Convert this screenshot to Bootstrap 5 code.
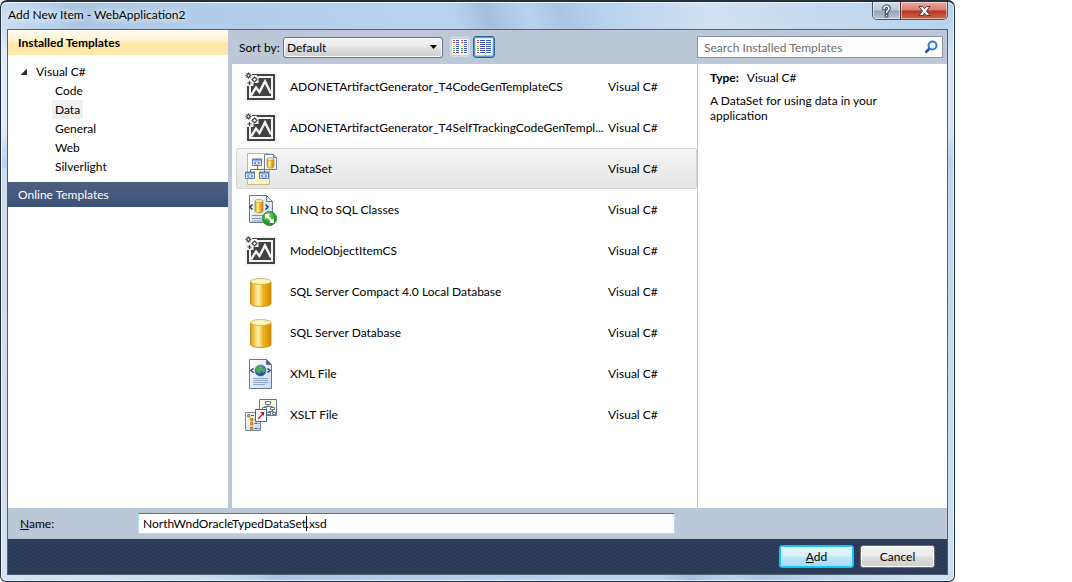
<!DOCTYPE html>
<html lang="en">
<head>
<meta charset="utf-8">
<meta name="viewport" content="width=device-width, initial-scale=1">
<title>Add New Item - WebApplication2</title>
<link href="https://cdn.jsdelivr.net/npm/bootstrap@5.3.0/dist/css/bootstrap.min.css" rel="stylesheet">
<style>
  body { font-family: "Segoe UI", Lato, "Open Sans", sans-serif; font-size: 12px; line-height: 15px; color: #000; background: #fff; }
  button, input, select { font-size: 12px; line-height: 15px; color: #000; }
  .dialog-shell { padding-right: 117px; }
  .dialog-window {
    min-height: 100vh; padding: 0 6px 6px; border: 1px solid #25303d; border-width: 2px 1px 1px; border-radius: 7px 7px 6px 6px;
    box-shadow: inset 0 0 0 1px #e6f2fd;
    background:
      linear-gradient(#e0ebf700 20px, #e0ebf7 50px, #e0ebf7 130px, #b2d0ee 165px, #b2d0ee00 166px) 0 0 / 8px 100% no-repeat,
      linear-gradient(#e0ebf700 20px, #d5e4f5 50px, #d5e4f5 130px, #b2d0ee 165px, #b2d0ee00 166px) 100% 0 / 8px 100% no-repeat,
      linear-gradient(70deg, #d5e3f3 0, #c9dcf0 190px, #b7d1ec 240px, #a9c5e2 260px, #b0cce8 370px, #b7d3ee 560px, #b7d3ee 620px, #a4bfdd 650px, #b7d3ee 690px, #a9c5e2 720px, #b7d3ee 760px, #d0e1f3 860px, #b7d3ee 100%);
  }
  .title-bar { height: 27px; }
  .title-bar h1 { font-size: 12px; line-height: 15px; padding: 5px 1px 0; text-shadow: 0 0 6px #fff, 0 0 8px #fff; }
  .caption-btns { height: 18px; border: 1px solid #4c5664; border-top: 0; border-radius: 0 0 5px 5px; overflow: hidden; }
  .caption-btns button { border: 0; padding: 0; box-shadow: inset 0 0 0 1px #ffffff80; }
  .help-btn { width: 27px; background: linear-gradient(#d3dce6, #bdc8d5 48%, #93a2b3 52%, #b7c6d6); }
  .close-btn { width: 47px; border-left: 1px solid #5d2a2a !important; background: linear-gradient(#e9a99b, #d77e6d 48%, #b8341f 52%, #d0664c); }
  .client-area { border: 1px solid #515f6e; background: #bcc7d8; }
  .side-pane { width: 220px; background: #fff; }
  .pane-head { height: 25px; padding: 5px 10px; font-size: 12px; line-height: 15px; font-weight: 700; background: linear-gradient(#fffbf0, #fff1cc 48%, #ffe8a6 52%, #ffe9ad); }
  .pane-online { height: 25px; padding: 5px 10px; margin-top: 6px; color: #fff; background: linear-gradient(#4d6082, #3d5277); }
  .tree-box a, .pane-online a { color: inherit; text-decoration: none; }
  .tree-box a { padding: 2px 3px; line-height: 15px; display: inline-block; }
  .tree-root { padding: 7px 0 0 12px; gap: 5px; }
  .tree-leaves { padding-left: 44px; }
  .tree-box li { height: 19px; }
  .tree-box .picked { background: #f0f0f0; }
  .tool-row { height: 34px; padding-right: 4px; }
  .sort-label { width: 51px; padding-left: 7px; white-space: nowrap; }
  .sort-pick {
    width: 160px; height: 21px; padding: 1px 20px 1px 3px; font-size: 12px; line-height: 15px; color: #000; border: 1px solid #707070; border-radius: 3px;
    background: url("data:image/svg+xml,%3Csvg xmlns='http://www.w3.org/2000/svg' width='7' height='4'%3E%3Cpath d='M0 0h7L3.5 4z'/%3E%3C/svg%3E") no-repeat right 5px center / 7px 4px, linear-gradient(#f2f2f2, #ebebeb 48%, #dddddd 52%, #cfcfcf);
    box-shadow: inset 0 0 0 1px #fcfcfc;
  }
  .view-set { gap: 3px; padding-left: 7px; }
  .view-btn { width: 20px; height: 20px; padding: 0; border: 1px solid #d6dde8; border-radius: 2px; background: #c9d2e0; }
  .view-btn.on { width: 22px; height: 22px; border: 1px solid #2c628b; border-radius: 3px; background: linear-gradient(#d9effb, #8fcbea); box-shadow: inset 0 0 0 1px #5f9fc6; }
  .view-btn svg { display: block; margin: auto; }
  .search-wrap { width: 246px; height: 22px; border: 1px solid #8591a2; background: #fff; }
  .search-wrap input { padding: 0 6px; font-size: 12px; line-height: 15px; min-height: 0; }
  .search-wrap input::placeholder { color: #6d6d6d; }
  .template-pane { background: #fff; padding: 2px 0 0 4px; }
  .template-row { height: 41px; padding: 0 0 0 8px; border: 1px solid transparent; background: none; border-radius: 2px; text-align: left; }
  .template-row.picked { border-color: #d4d4d4; background: linear-gradient(#f5f5f5, #e5e5e5); }
  .template-row .kind { width: 88px; }
  .template-row .caption { padding-left: 13px; }
  .info-pane { width: 250px; border-left: 1px solid #bcc7d8; background: #fff; padding: 6px 54px 6px 12px; }
  .name-row { height: 31px; }
  .name-row label { width: 130px; padding-left: 12px; }
  .name-box { width: 537px; }
  .name-box input { height: 21px; padding: 0 4px; font-size: 12px; line-height: 15px; border: 1px solid #b5dcf3; border-top-color: #3d7bad; border-radius: 0; min-height: 0; color: #000; }
  .name-caret { position: absolute; left: 168px; top: 3px; width: 1px; height: 15px; background: #000; }
  .action-row { gap: 6px; height: 35px; padding-right: 12px; background: radial-gradient(circle at 1px 1px, #405478 0, #40547800 1px) 0 0 / 4px 4px, radial-gradient(circle at 1px 1px, #405478 0, #40547800 1px) 2px 2px / 4px 4px, #293955; }
  .dlg-btn { width: 75px; height: 23px; padding: 0; border: 1px solid #707070; border-radius: 3px; background: linear-gradient(#f4f4f4, #ebebeb 48%, #dddddd 52%, #cfcfcf); box-shadow: inset 0 0 0 1px #fff; }
  .dlg-btn.main { border-color: #2cb5e8; box-shadow: inset 0 0 0 1px #14cdfb; background: linear-gradient(#eaf6fd, #d9f0fc 48%, #bee6fd 52%, #a7d9f5); }
</style>
</head>
<body>
<svg width="0" height="0" class="position-absolute" aria-hidden="true">
  <defs>
    <linearGradient id="gold"><stop offset="0" stop-color="#d99a10"/><stop offset=".15" stop-color="#f0c040"/><stop offset=".38" stop-color="#fdf3b0"/><stop offset=".62" stop-color="#eeb41c"/><stop offset="1" stop-color="#cf8a00"/></linearGradient>
    <linearGradient id="sheet" x2="1" y2="1"><stop offset="0" stop-color="#fff"/><stop offset="1" stop-color="#c9d9ee"/></linearGradient>
    <linearGradient id="cream" x2="1" y2="1"><stop offset="0" stop-color="#fff"/><stop offset="1" stop-color="#fbf3b4"/></linearGradient>
    <radialGradient id="leaf" cx=".4" cy=".3"><stop offset="0" stop-color="#8fe077"/><stop offset="1" stop-color="#1f9a1f"/></radialGradient>
    <radialGradient id="sea" cx=".35" cy=".3"><stop offset="0" stop-color="#a8d4f8"/><stop offset="1" stop-color="#1d56a8"/></radialGradient>
    <symbol id="i-chart" viewBox="0 0 32 32">
      <path fill="#f5f5f5" d="M0 1h32v30H0z"/><path fill="#424242" d="M2 3h28v26H2z"/>
      <path fill="none" stroke="#f5f5f5" stroke-width="2" d="M5 6h22v20H5z"/>
      <path fill="none" stroke="#f5f5f5" stroke-width="2.400" d="M6 24.500l5-8 3.500 4.500 5.500-10.500 6 12"/>
      <path fill="#f5f5f5" d="M0 1h7v3h5v3h1.500v5h-5v3H0z"/>
      <path stroke="#424242" stroke-width="1.200" fill="none" d="M3.500 1.500v6M.5 4.500h6M1.500 2.500l4 4M5.500 2.500l-4 4M4.500 10v4M2.500 12h4M9.500 6l2.500 2.500L9.500 11 7 8.500z"/>
      <circle cx="3.500" cy="4.500" r=".9" fill="#fff"/>
    </symbol>
    <symbol id="i-dataset" viewBox="0 0 32 32">
      <path fill="url(#cream)" stroke="#c9bd83" d="M2.500.5h22v31h-22z"/>
      <path fill="none" stroke="#566a8f" d="M12.500 13v3.500M5.500 20v-3.500h14V20"/>
      <g fill="#dbe8fb" stroke="#5d80bd"><path d="M7.500 6.500h9v6h-9zM.5 19.500h9v6h-9zM14.500 19.500h9v6h-9z"/></g>
      <path stroke="#5d80bd" stroke-width="2" d="M7 6.500h10M0 19.500h10M14 19.500h10"/>
      <path fill="none" stroke="#1f3fa0" d="M11 8.500L9.500 10l1.500 1.500M13 8.500l1.500 1.500-1.500 1.500M4 21.500L2.500 23 4 24.500M6 21.500L7.500 23 6 24.500M18 21.500L16.500 23l1.500 1.500M20 21.500l1.500 1.500-1.500 1.500"/>
      <path fill="#f5f9ff" stroke="#6680a8" d="M19.500 1.500h9l3 3v12h-12z"/><path fill="#c2d2ec" stroke="#6680a8" d="M28.500 1.500v3h3"/>
      <path fill="url(#gold)" stroke="#b47b08" stroke-width=".7" d="M22 6v7.500c0 2 7 2 7 0V6z"/><ellipse cx="25.500" cy="6" rx="3.500" ry="1.300" fill="#fff5c0" stroke="#b47b08" stroke-width=".6"/>
    </symbol>
    <symbol id="i-linq" viewBox="0 0 32 32">
      <path fill="url(#sheet)" stroke="#67788f" d="M4.500 1.500h17l6 6v21h-23z"/><path fill="#e3ecf8" stroke="#67788f" d="M21.500 1.500v6h6z"/>
      <path fill="url(#gold)" stroke="#b47b08" stroke-width=".7" d="M10 7v10c0 2.300 8 2.300 8 0V7z"/><ellipse cx="14" cy="7" rx="4" ry="1.500" fill="#fff5c0" stroke="#b47b08" stroke-width=".6"/>
      <path fill="none" stroke="#19407a" stroke-width="1.600" d="M7.500 10.500L5 13l2.500 2.500M20.500 10.500L23 13l-2.500 2.500"/>
      <path stroke="#8095b8" d="M7 21.500h11M7 24.500h10M7 27h10"/>
      <circle cx="24.500" cy="24.500" r="7" fill="url(#leaf)" stroke="#2a8a2a"/>
      <path fill="#fff" d="M20 20h5l-1.700 1.700 4 4L29 24v5h-5l1.700-1.700-4-4L20 25z"/>
    </symbol>
    <symbol id="i-db" viewBox="0 0 32 32">
      <path fill="url(#gold)" stroke="#c08512" stroke-width=".8" d="M5.500 6v21.500c0 4 20.500 4 20.500 0V6z"/>
      <ellipse cx="15.750" cy="5.500" rx="10.250" ry="3" fill="#fdf5c4" stroke="#d0a53a" stroke-width=".8"/>
    </symbol>
    <symbol id="i-xml" viewBox="0 0 32 32">
      <path fill="url(#sheet)" stroke="#67788f" d="M4.500 1.500h17l5 5v24h-22z"/><path fill="#40587d" stroke="#67788f" d="M21.500 1.500v5h5z"/>
      <circle cx="15.500" cy="12.500" r="5.500" fill="url(#sea)" stroke="#3464a0" stroke-width=".6"/>
      <path fill="#4dac45" d="M11 10c1-2 3-3 5-2.500l-1 2 1.500 1.500-2 1.500 1 2-2 1.500-1.500-3-1.500-1zM18 8.500c2 1 2.700 3 2.300 5l-2 1.500-1.300-3z"/>
      <path fill="none" stroke="#19407a" stroke-width="1.600" d="M8.500 10.500L6 12.500l2.500 2M22.500 10.500l2.500 2-2.500 2"/>
      <path stroke="#8fa3c4" d="M8 20.500h15M8 22.500h15M8 24.500h15M8 26.500h12"/>
    </symbol>
    <symbol id="i-xslt" viewBox="0 0 32 32">
      <path fill="url(#cream)" stroke="#5f7696" d="M14.500.5h17v16h-17z"/>
      <path fill="#fff" stroke="#6a768d" d="M20.500 2.500h5v3h-5zM17.500 8.500h4v2h-4zM25.500 8.500h4v2h-4zM21.500 13.500h4v2h-4zM27.500 13.500h3v2h-3z"/><path fill="none" stroke="#6a768d" d="M23 6v1.500M19.500 8.500v-1h8v1M27.500 11v1.500M23.500 13.500v-1h5v1"/>
      <path fill="url(#sheet)" stroke="#7487a3" d="M.5 13.500h15v18H.5z"/>
      <path fill="#e9a11a" stroke="#a86800" stroke-width=".6" d="M2.500 15.500h2.500v2.500H2.500zM5.500 19.500H8V22H5.500zM5.500 23.500H8V26H5.500zM5.500 28H8v2.500H5.500z"/>
      <path fill="none" stroke="#405a86" stroke-dasharray="3 1" d="M6 16.500h4M9.500 20.500h5M9.500 24.500h5M9.500 29.500h5"/>
      <path fill="#fff" stroke="#41658f" d="M10.500 10.500h11v12h-11z"/>
      <path fill="none" stroke="#c01818" stroke-width="1.200" d="M13 20l5-5"/><path fill="#c01818" d="M15 13h4v4z"/>
    </symbol>
  </defs>
</svg>

<main class="dialog-shell">
  <section class="dialog-window d-flex flex-column" aria-label="Add New Item">
    <header class="title-bar d-flex justify-content-between align-items-start">
      <h1 class="fw-normal m-0">Add New Item - WebApplication2</h1>
      <div class="caption-btns d-flex">
        <button type="button" class="help-btn" aria-label="Help"><svg class="d-block mx-auto" width="11" height="14" viewBox="0 0 11 14"><g fill="none" stroke-linecap="square"><path stroke="#3d4858" stroke-width="3.600" d="M3 4.500c0-3 5-3 5 0 0 2-2.500 2-2.500 4M5.500 11.500v.2"/><path stroke="#fff" stroke-width="1.600" d="M3 4.500c0-3 5-3 5 0 0 2-2.500 2-2.500 4M5.500 11.500v.2"/></g></svg></button>
        <button type="button" class="close-btn" aria-label="Close"><svg class="d-block mx-auto" width="13" height="12" viewBox="0 0 13 12"><path fill="#fff" stroke="#4e3a44" d="M1 1.500h3.500l2 2.300 2-2.300H12L8.500 6l3.500 4.500H8.500l-2-2.300-2 2.300H1L4.500 6z"/></svg></button>
      </div>
    </header>

    <div class="client-area flex-grow-1 d-flex flex-column">
      <div class="d-flex flex-grow-1">
        <nav class="side-pane flex-shrink-0" aria-label="Template categories">
          <h2 class="pane-head m-0">Installed Templates</h2>
          <div class="tree-box">
            <div class="tree-root d-flex align-items-center">
              <svg width="8" height="8" viewBox="0 0 8 8"><path fill="#333" d="M7 .5V7H.5z"/></svg>
              <a href="#">Visual C#</a>
            </div>
            <ul class="tree-leaves list-unstyled m-0">
              <li><a href="#">Code</a></li>
              <li><a href="#" class="picked" aria-current="true">Data</a></li>
              <li><a href="#">General</a></li>
              <li><a href="#">Web</a></li>
              <li><a href="#">Silverlight</a></li>
            </ul>
          </div>
          <div class="pane-online"><a href="#">Online Templates</a></div>
        </nav>

        <div class="flex-grow-1 d-flex flex-column ms-1 overflow-hidden">
          <div class="tool-row d-flex align-items-center">
            <label for="sort" class="sort-label">Sort by:</label>
            <select id="sort" class="form-select sort-pick"><option>Default</option></select>
            <div class="view-set d-flex align-items-center">
            <button type="button" class="view-btn" aria-label="Small icons"><svg width="16" height="16" viewBox="0 0 16 16"><path fill="#fff" d="M0 0h16v16H0z"/><g fill="none" stroke-dasharray="1 1"><g id="dots" stroke-width="2"><path stroke="#e03a24" d="M2 1v4M2 13v2"/><path stroke="#e8c22a" d="M2 7v2"/><path stroke="#48a848" d="M2 9v4"/></g><use href="#dots" x="8"/><path stroke="#3b50b8" d="M5.500 1v14M13.500 1v14" stroke-width="3"/></g></svg></button>
            <button type="button" class="view-btn on" aria-label="Medium icons" aria-pressed="true"><svg width="16" height="16" viewBox="0 0 16 16"><path fill="#fff" d="M0 0h16v16H0z"/><g fill="none" stroke-dasharray="1 1"><path stroke="#e03a24" stroke-width="2" d="M2 1v4M2 13v2"/><path stroke="#e8c22a" stroke-width="2" d="M2 7v2"/><path stroke="#48a848" stroke-width="2" d="M2 9v4"/><path stroke="#3b50b8" stroke-width="5" d="M6.500 1v14M12.500 1v14"/></g></svg></button>
            </div>
            <div class="search-wrap d-flex align-items-center ms-auto">
              <input type="search" class="form-control border-0 bg-transparent shadow-none" placeholder="Search Installed Templates" aria-label="Search Installed Templates">
              <svg class="flex-shrink-0 me-1" width="14" height="14" viewBox="0 0 14 14"><path stroke="#2c52a0" stroke-width="2.500" d="M1.500 12.500l4-4"/><circle cx="8.500" cy="5.500" r="4" fill="#eef7ff" stroke="#2f7ccc" stroke-width="2"/></svg>
            </div>
          </div>

          <div class="d-flex flex-grow-1">
            <div class="template-pane flex-grow-1 d-flex flex-column overflow-hidden" id="templates"></div>
            <aside class="info-pane flex-shrink-0">
              <p class="mb-2"><strong>Type:</strong><span class="ms-2">Visual C#</span></p>
              <p class="m-0">A DataSet for using data in your application</p>
            </aside>
          </div>
        </div>
      </div>

      <div class="name-row d-flex align-items-center">
        <label for="itemName"><u>N</u>ame:</label>
        <div class="name-box position-relative">
          <input id="itemName" class="form-control" type="text" value="NorthWndOracleTypedDataSet.xsd">
          <span class="name-caret"></span>
        </div>
      </div>
      <footer class="action-row d-flex align-items-center justify-content-end">
        <button type="button" class="dlg-btn main"><u>A</u>dd</button>
        <button type="button" class="dlg-btn">Cancel</button>
      </footer>
    </div>
  </section>
</main>

<script src="https://cdn.jsdelivr.net/npm/bootstrap@5.3.0/dist/js/bootstrap.bundle.min.js"></script>
<script>
  const templates = [
    ["chart", "ADONETArtifactGenerator_T4CodeGenTemplateCS"],
    ["chart", "ADONETArtifactGenerator_T4SelfTrackingCodeGenTempl..."],
    ["dataset", "DataSet"],
    ["linq", "LINQ to SQL Classes"],
    ["chart", "ModelObjectItemCS"],
    ["db", "SQL Server Compact 4.0 Local Database"],
    ["db", "SQL Server Database"],
    ["xml", "XML File"],
    ["xslt", "XSLT File"]
  ];
  document.getElementById("templates").innerHTML = templates.map(([icon, name]) => `
    <button type="button" class="template-row d-flex align-items-center ${name === "DataSet" ? "picked" : ""}">
      <svg class="flex-shrink-0" width="32" height="32"><use href="#i-${icon}"/></svg>
      <span class="caption flex-grow-1 text-truncate">${name}</span>
      <span class="kind flex-shrink-0">Visual C#</span>
    </button>`).join("");
</script>
</body>
</html>
